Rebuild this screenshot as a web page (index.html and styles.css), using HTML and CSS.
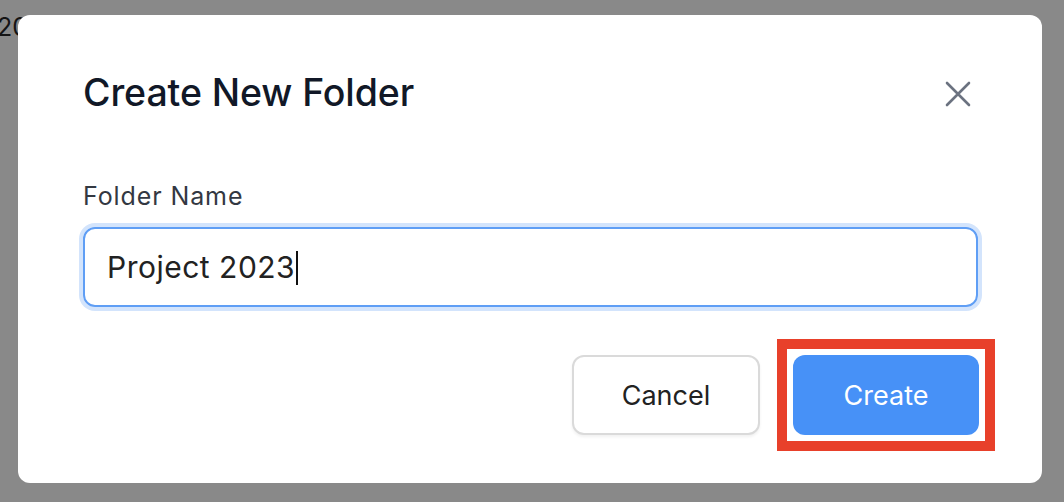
FILE: index.html
```html
<!DOCTYPE html>
<html lang="en">
<head>
<meta charset="utf-8">
<title>Create New Folder</title>
<link rel="stylesheet" href="styles.css">
</head>
<body>
<div class="page">
  <p class="bg-text">2023</p>
</div>
<div class="modal">
  <div class="modal-header">
    <h2 class="modal-title">Create New Folder</h2>
    <button class="close-btn" aria-label="Close">
      <svg width="26" height="26" viewBox="0 0 26 26" fill="none" stroke="#6b7280" stroke-width="2.6" stroke-linecap="round">
        <path d="M2 2 L24 24 M24 2 L2 24"/>
      </svg>
    </button>
  </div>
  <label class="field-label">Folder Name</label>
  <div class="input-box">
    <span class="input-text">Project 2023</span><span class="caret"></span>
  </div>
  <div class="actions">
    <button class="btn btn-cancel">Cancel</button>
    <button class="btn btn-create">Create</button>
  </div>
</div>
</body>
</html>
```
FILE: styles.css
```css
html, body {
  margin: 0;
  padding: 0;
  width: 1064px;
  height: 502px;
  overflow: hidden;
  font-family: Inter, "Noto Sans", sans-serif;
}

body {
  background: #898989;
}

.page {
  padding-top: 12px;
}

.bg-text {
  margin: 0 0 0 -3px;
  font-size: 25px;
  color: #141414;
}

.modal {
  position: absolute;
  left: 18px;
  top: 15px;
  width: 1024px;
  height: 468px;
  box-sizing: border-box;
  background: #fff;
  border-radius: 12px;
  padding: 56px 64px 48px 65px;
  display: flex;
  flex-direction: column;
}

.modal-header {
  display: flex;
  align-items: center;
  justify-content: space-between;
  height: 44px;
}

.modal-title {
  margin: 0;
  font-size: 37.5px;
  line-height: 44px;
  font-weight: 500;
  color: #111827;
  letter-spacing: -0.1px;
}

.close-btn {
  border: 0;
  background: none;
  padding: 0;
  margin-right: 7px;
  margin-top: 2px;
  width: 26px;
  height: 26px;
  display: flex;
}

.field-label {
  margin-top: 65px;
  font-size: 25px;
  line-height: 32px;
  letter-spacing: 0.9px;
  color: #333842;
}

.input-box {
  margin-top: 15px;
  height: 80px;
  box-sizing: border-box;
  border: 2px solid #5f9ef5;
  border-radius: 12px;
  box-shadow: 0 0 0 4px #d3e4fc;
  padding: 0 22px;
  display: flex;
  align-items: center;
}

.input-text {
  font-size: 30px;
  letter-spacing: 0.5px;
  color: #222;
}

.caret {
  width: 2px;
  height: 34px;
  background: #111;
  margin-left: 1px;
  margin-top: 2px;
}

.actions {
  margin-top: 48px;
  display: flex;
  justify-content: flex-end;
  gap: 33px;
}

.btn {
  height: 80px;
  border-radius: 12px;
  font-family: Inter, "Noto Sans", sans-serif;
  font-size: 27px;
  box-sizing: border-box;
  cursor: pointer;
  padding: 0;
}

.btn-cancel {
  width: 188px;
  background: #fff;
  border: 2px solid #dadada;
  color: #222;
  box-shadow: 0 2px 3px rgba(0, 0, 0, 0.06);
}

.btn-create {
  width: 186px;
  background: #4791f7;
  border: 0;
  color: #fff;
  position: relative;
  margin-right: -1px;
}

.btn-create::after {
  content: "";
  position: absolute;
  left: -16px;
  top: -16px;
  right: -16px;
  bottom: -16px;
  border: 10px solid #e8402a;
  pointer-events: none;
}
```
